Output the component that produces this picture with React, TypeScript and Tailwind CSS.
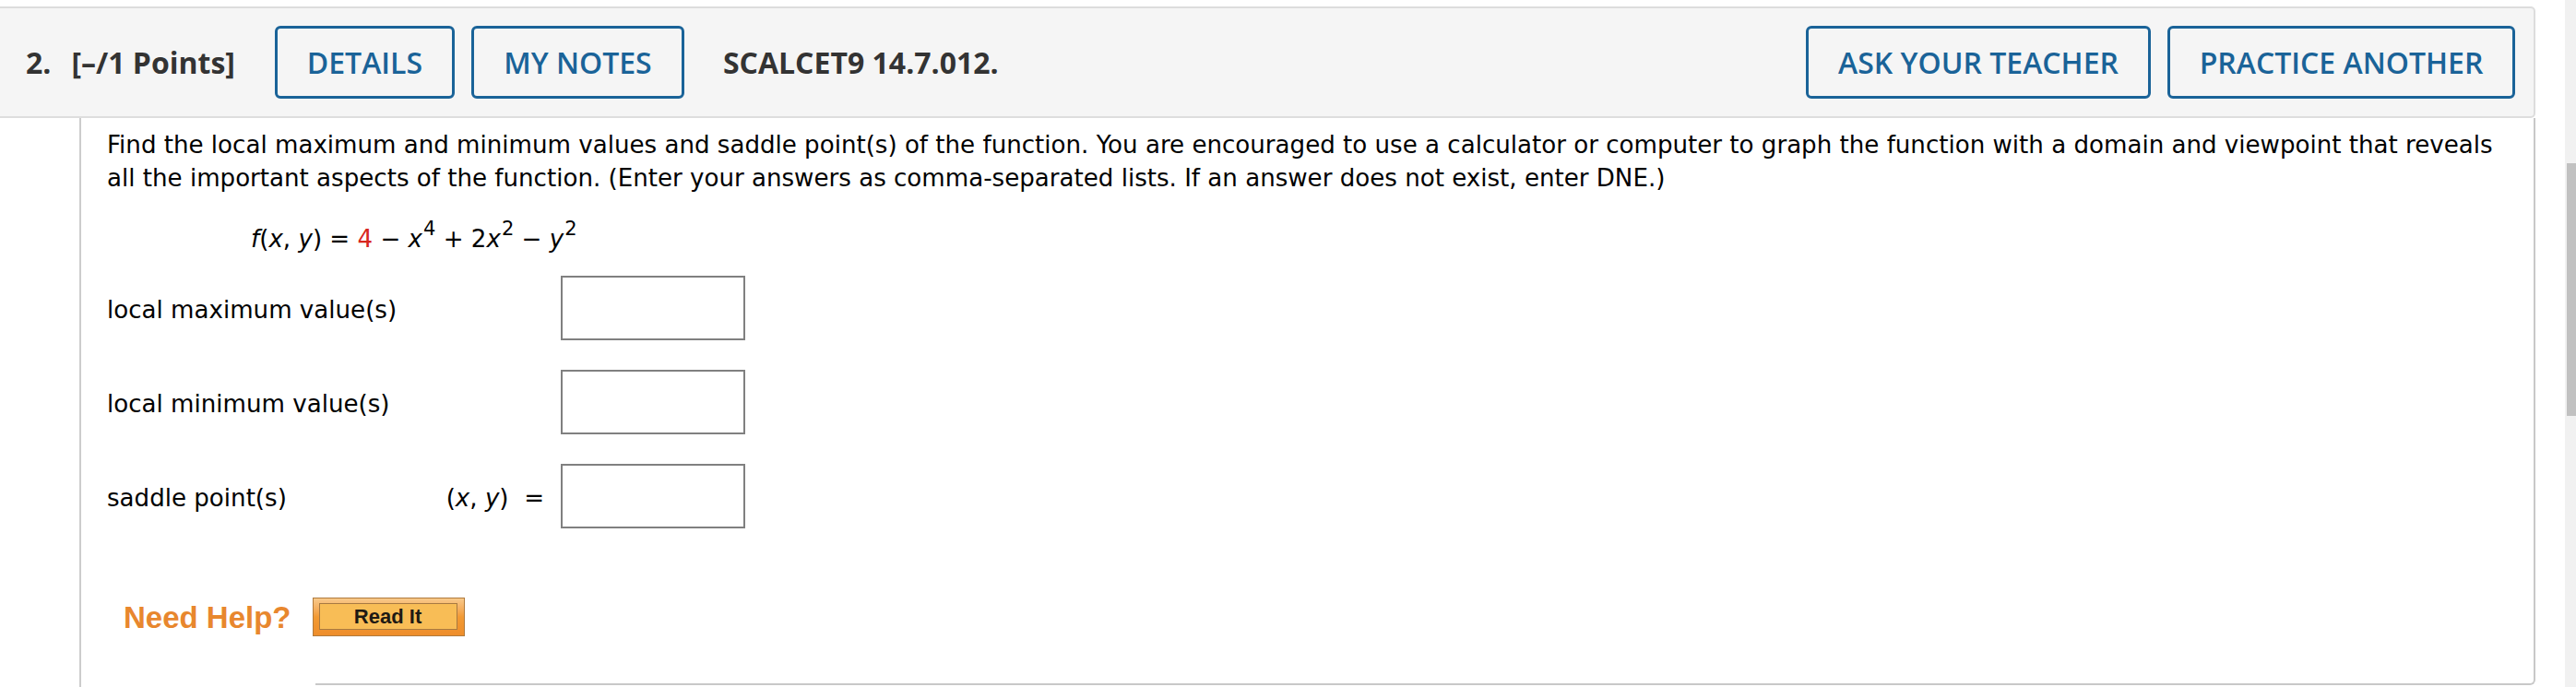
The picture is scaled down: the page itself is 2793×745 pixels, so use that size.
export default function App() {
  const headFont = { fontFamily: '"Open Sans", "Liberation Sans", sans-serif' };
  const bodyFont = { fontFamily: '"DejaVu Sans", Verdana, sans-serif' };
  const btn =
    "h-[79px] shrink-0 border-[3px] border-[#1a6398] rounded-[6px] text-[#1a6398] font-semibold text-[32px] flex items-center justify-center bg-transparent";
  const sup = "text-[21px] -top-[13px] ml-[1px]";
  return (
    <div className="w-[2793px] h-[745px] overflow-hidden bg-white flex">
      <div className="w-[2781px] flex flex-col">
        <div
          className="mt-[7px] w-[2749px] h-[121px] shrink-0 border-t-2 border-b-2 border-r-2 border-[#dddddd] rounded-tr-[5px] rounded-br-[5px] bg-[#f5f5f5] flex items-center pl-[28px] pr-[20px]"
          style={headFont}
        >
          <span className="font-bold text-[32px] text-[#333333]">2.</span>
          <span className="ml-[22px] font-bold text-[32px] text-[#333333]">[–/1 Points]</span>
          <button className={`${btn} ml-[43px] w-[195px]`}>DETAILS</button>
          <button className={`${btn} ml-[18px] w-[231px]`}>MY NOTES</button>
          <span className="ml-[42px] font-bold text-[32px] text-[#333333]">SCALCET9 14.7.012.</span>
          <button className={`${btn} ml-auto w-[374px]`}>ASK YOUR TEACHER</button>
          <button className={`${btn} ml-[18px] w-[377px]`}>PRACTICE ANOTHER</button>
        </div>
        <div className="flex h-[617px] shrink-0">
          <div className="w-[86px] shrink-0" />
          <div className="w-[2663px] shrink-0 border-l-2 border-[#cccccc] flex flex-col">
            <div
              className="h-[562px] shrink-0 border-r-2 border-[#c8c8c8] pl-[28px] pt-[11px] text-[26.1px] text-black flex flex-col"
              style={bodyFont}
            >
              <p className="leading-[36px] whitespace-nowrap">
                Find the local maximum and minimum values and saddle point(s) of the function. You are encouraged to use a calculator or computer to graph the function with a domain and viewpoint that reveals
                <br />
                all the important aspects of the function. (Enter your answers as comma-separated lists. If an answer does not exist, enter DNE.)
              </p>
              <p className="mt-[30px] pl-[156px] leading-[36px] h-[36px] whitespace-nowrap">
                <i>f</i>(<i>x</i>, <i>y</i>) = <span className="text-[#d8261e]">4</span> − <i>x</i>
                <sup className={sup}>4</sup> + 2<i>x</i>
                <sup className={sup}>2</sup> − <i>y</i>
                <sup className={sup}>2</sup>
              </p>
              <div className="mt-[22px] flex items-center h-[70px]">
                <span className="w-[492px] leading-[36px] pt-[4px]">local maximum value(s)</span>
                <div className="w-[200px] h-[70px] border-2 border-[#808080] bg-white" />
              </div>
              <div className="mt-[32px] flex items-center h-[70px]">
                <span className="w-[492px] leading-[36px] pt-[4px]">local minimum value(s)</span>
                <div className="w-[200px] h-[70px] border-2 border-[#808080] bg-white" />
              </div>
              <div className="mt-[32px] flex items-center h-[70px]">
                <div className="w-[492px] flex items-center justify-between pr-[18px] leading-[36px] pt-[4px]">
                  <span>saddle point(s)</span>
                  <span>
                    (<i>x</i>, <i>y</i>)&nbsp; =
                  </span>
                </div>
                <div className="w-[200px] h-[70px] border-2 border-[#808080] bg-white" />
              </div>
              <div className="mt-[75px] flex items-center h-[42px] pl-[18px]">
                <span
                  className="text-[33px] font-bold text-[#e8872e] leading-none"
                  style={{ fontFamily: '"Liberation Sans", Arial, sans-serif' }}
                >
                  Need Help?
                </span>
                <div className="ml-[23px] w-[165px] h-[42px] border border-[#b07a3c] bg-linear-to-b from-[#f8c98a] via-[#f29a33] to-[#ee8d2a] pt-[5px] pb-[6px] pl-[6px] pr-[7px]">
                  <div
                    className="h-full border border-[#a87a42] bg-[#f8bd56] flex items-center justify-center text-[22px] font-bold text-[#1e1a14] leading-none"
                    style={{ fontFamily: '"Liberation Sans", Arial, sans-serif' }}
                  >
                    Read It
                  </div>
                </div>
              </div>
            </div>
            <div className="flex h-[53px] shrink-0">
              <div className="w-[254px] shrink-0" />
              <div className="flex-1 border-b-2 border-r-2 border-[#c8c8c8] rounded-br-[6px]" />
            </div>
          </div>
        </div>
      </div>
      <div className="w-[12px] shrink-0 bg-[#f1f1f1] pl-[2px]">
        <div className="mt-[177px] h-[274px] bg-[#c1c1c1]" />
      </div>
    </div>
  );
}
